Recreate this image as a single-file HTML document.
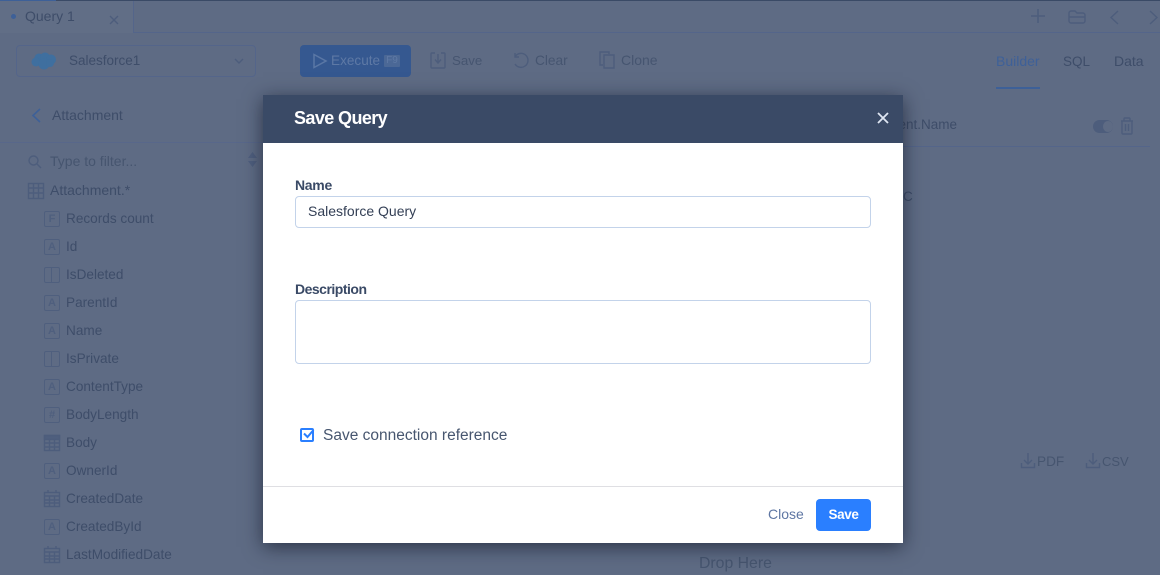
<!DOCTYPE html>
<html lang="en"><head><meta charset="utf-8"><title>Save Query</title>
<style>
*{box-sizing:border-box}
html,body{margin:0;padding:0}
body{width:1160px;height:575px;position:relative;overflow:hidden;background:#5e6b84;font-family:"Liberation Sans",sans-serif;font-size:14px;color:#3e4d69}
.a{position:absolute}
.t{position:absolute;white-space:nowrap;line-height:18px}
svg{position:absolute;overflow:visible;fill:none;stroke:#4d5d7c;stroke-width:1.4}
.row{position:absolute;left:66px;white-space:nowrap;line-height:18px;color:#3e4d69;font-size:13.6px}
.ic{position:absolute;left:44px;width:16px;height:16px;border:1px solid #4f5f7e;border-radius:2px;color:#4f5f7e;font-size:11px;line-height:14px;text-align:center;font-weight:bold}
.ic.b:after{content:"";position:absolute;left:6px;top:0;bottom:0;width:1px;background:#4f5f7e}
#modal{position:absolute;left:263px;top:95px;width:640px;height:448px;background:#fff;box-shadow:0 4px 18px rgba(10,15,30,.6)}
</style></head><body>
<div class="a" style="left:0;top:0;width:1160px;height:1px;background:#3a4a66"></div>
<div class="a" style="left:0;top:1px;width:134px;height:32px;background:#616e86;border-right:1px solid #54658a"></div>
<div class="a" style="left:134px;top:32px;width:1026px;height:1px;background:#54658a"></div>
<div class="a" style="left:0;top:0;width:56px;height:1px;background:#3d6098"></div>
<div class="a" style="left:11px;top:14px;width:5px;height:5px;border-radius:50%;background:#3d6098"></div>
<div class="t" style="left:25px;top:7px;font-size:14px">Query 1</div>
<svg style="left:109px;top:15px" width="10" height="10"><path d="M1 1L9 9M9 1L1 9"/></svg>

<svg style="left:1031px;top:9px" width="14" height="14"><path d="M7 0V14M0 7H14" stroke-width="1.6"/></svg>
<svg style="left:1068px;top:10px" width="18" height="14"><path d="M1 3C1 2 2 1 3 1H7L9 3H15C16 3 17 4 17 5V11C17 12 16 13 15 13H3C2 13 1 12 1 11ZM1 7H17"/></svg>
<svg style="left:1110px;top:10px" width="9" height="15"><path d="M8 1L1 7.5L8 14"/></svg>
<svg style="left:1149px;top:10px" width="9" height="15"><path d="M1 1L8 7.5L1 14"/></svg>

<div class="a" style="left:16px;top:45px;width:240px;height:32px;border:1px solid #54658a;border-radius:4px"></div>
<svg style="left:31px;top:52px;stroke:none;fill:#3f6f9f" width="26" height="18"><circle cx="8" cy="6" r="4.500"/><circle cx="14" cy="5.500" r="5"/><circle cx="20" cy="7.500" r="5"/><circle cx="5" cy="10" r="4.500"/><circle cx="13" cy="12" r="5.500"/><circle cx="19" cy="11" r="4"/></svg>
<div class="t" style="left:69px;top:52px;font-size:13.500px">Salesforce1</div>
<svg style="left:234px;top:58px" width="10" height="6"><path d="M1 1L5 5L9 1"/></svg>

<div class="a" style="left:300px;top:45px;width:111px;height:32px;background:#355890;border-radius:4px"></div>
<svg style="left:313px;top:53px;stroke:#5a77a5;stroke-width:1.5" width="14" height="16"><path d="M1 1.500L13 8L1 14.500Z"/></svg>
<div class="t" style="left:331px;top:52px;font-size:13.600px;color:#5e79a5">Execute</div>
<div class="a" style="left:384px;top:55px;width:16px;height:12px;background:#4b6896;color:#5e79a5;font-size:10px;line-height:12px;text-align:center;border-radius:1px">F9</div>

<svg style="left:430px;top:52px" width="16" height="17"><path d="M5 1H2C1.400 1 1 1.400 1 2V15C1 15.600 1.400 16 2 16H14C14.600 16 15 15.600 15 15V2C15 1.400 14.600 1 14 1H11M8 2V10M5 7.500L8 11L11 7.500"/></svg>
<div class="t" style="left:452px;top:52px;font-size:13.300px;color:#465570">Save</div>
<svg style="left:513px;top:52px" width="16" height="17"><path d="M2.500 4A7 7 0 1 1 2 12M2 1V5H6"/></svg>
<div class="t" style="left:535px;top:52px;font-size:13.700px;color:#465570">Clear</div>
<svg style="left:599px;top:51px" width="16" height="18"><path d="M10 3V1H1V14H4M5 4H15V17H5Z"/></svg>
<div class="t" style="left:621px;top:51px;font-size:14px;color:#465570">Clone</div>

<div class="t" style="left:996px;top:52px;font-size:14px;color:#3e6098">Builder</div>
<div class="t" style="left:1063px;top:53px;font-size:13.500px">SQL</div>
<div class="t" style="left:1114px;top:52px;font-size:14px">Data</div>
<div class="a" style="left:996px;top:87px;width:44px;height:2px;background:#3d6098"></div>

<svg style="left:31px;top:108px;stroke:#3d6098;stroke-width:1.6" width="10" height="15"><path d="M9 1L2 7.500L9 14"/></svg>
<div class="t" style="left:52px;top:106px;font-size:14px">Attachment</div>
<div class="a" style="left:0;top:142px;width:263px;height:1px;background:#58678a"></div>
<svg style="left:28px;top:155px" width="13" height="13"><circle cx="5.500" cy="5.500" r="4.500"/><path d="M9 9L13 13"/></svg>
<div class="t" style="left:50px;top:152px;font-size:14px;color:#46556f">Type to filter...</div>
<svg style="left:248px;top:152px;stroke:none;fill:#4f5f7e" width="9" height="15"><path d="M4.500 0L9 6H0ZM0 9H9L4.500 15Z"/></svg>

<svg style="left:28px;top:183px" width="16" height="16"><rect x=".5" y=".5" width="15" height="15"/><path d="M.5 5H15.500M.5 10H15.500M5.500 .5V15.500M10.500 .5V15.500"/></svg>
<div class="t" style="left:50px;top:181px;font-size:14px">Attachment.*</div>

<div class="ic" style="top:211px">F</div><div class="row" style="top:210px">Records count</div>
<div class="ic" style="top:239px">A</div><div class="row" style="top:238px">Id</div>
<div class="ic b" style="top:267px"></div><div class="row" style="top:266px">IsDeleted</div>
<div class="ic" style="top:295px">A</div><div class="row" style="top:294px">ParentId</div>
<div class="ic" style="top:323px">A</div><div class="row" style="top:322px">Name</div>
<div class="ic b" style="top:351px"></div><div class="row" style="top:350px">IsPrivate</div>
<div class="ic" style="top:379px">A</div><div class="row" style="top:378px">ContentType</div>
<div class="ic" style="top:407px">#</div><div class="row" style="top:406px">BodyLength</div>
<svg style="left:44px;top:435px" width="16" height="16"><rect x=".5" y=".5" width="15" height="15"/><rect x=".5" y=".5" width="15" height="4" fill="#4f5f7e"/><path d="M.5 8H15.500M.5 12H15.500M5.500 4V15.500M10.500 4V15.500"/></svg><div class="row" style="top:434px">Body</div>
<div class="ic" style="top:463px">A</div><div class="row" style="top:462px">OwnerId</div>
<svg style="left:44px;top:490px" width="16" height="17"><rect x=".5" y="2.500" width="15" height="14"/><path d="M.5 6H15.500M.5 10H15.500M.5 13H15.500M5.500 6V16.500M10.500 6V16.500M4 0V3M12 0V3"/></svg><div class="row" style="top:490px">CreatedDate</div>
<div class="ic" style="top:519px">A</div><div class="row" style="top:518px">CreatedById</div>
<svg style="left:44px;top:546px" width="16" height="17"><rect x=".5" y="2.500" width="15" height="14"/><path d="M.5 6H15.500M.5 10H15.500M.5 13H15.500M5.500 6V16.500M10.500 6V16.500M4 0V3M12 0V3"/></svg><div class="row" style="top:546px">LastModifiedDate</div>

<div class="a" style="left:903px;top:146px;width:247px;height:1px;background:#54658a"></div>
<div class="t" style="left:849px;top:116px;font-size:13.500px">Attachment.Name</div>
<div class="a" style="left:1093px;top:120px;width:20px;height:13px;border-radius:7px;background:#4d5d7c"></div>
<div class="a" style="left:1103px;top:121px;width:10px;height:11px;border-radius:50%;background:#5e6b84"></div>
<svg style="left:1120px;top:117px" width="14" height="18"><path d="M1 4H13M4 4V2C4 1.400 4.500 1 5 1H9C9.500 1 10 1.400 10 2V4M2 4V16C2 16.600 2.500 17 3 17H11C11.500 17 12 16.600 12 16V4M5.500 7V14M8.500 7V14"/></svg>
<div class="t" style="left:903px;top:188px;font-size:13.500px">C</div>

<svg style="left:1021px;top:453px" width="14" height="15"><path d="M7 0V11M3 7L7 11L11 7M.5 10V14.500H13.500V10"/></svg>
<div class="t" style="left:1037px;top:453px;font-size:13.600px;color:#46556f">PDF</div>
<svg style="left:1086px;top:453px" width="14" height="15"><path d="M7 0V11M3 7L7 11L11 7M.5 10V14.500H13.500V10"/></svg>
<div class="t" style="left:1102px;top:453px;font-size:13px;color:#46556f">CSV</div>
<div class="t" style="left:699px;top:555px;font-size:15.800px;color:#46556f">Drop Here</div>

<div id="modal">
  <div class="a" style="left:0;top:0;width:640px;height:48px;background:#3a4a66"></div>
  <div class="t" style="left:31px;top:13px;font-size:18px;line-height:20px;font-weight:bold;color:#fff;letter-spacing:-.6px">Save Query</div>
  <svg style="left:615px;top:18px;stroke:#dfe6f2;stroke-width:1.800" width="10" height="10"><path d="M0 0L10 10M10 0L0 10"/></svg>
  <div class="t" style="left:32px;top:81px;font-size:14px;font-weight:bold;color:#3a4a66;letter-spacing:-.3px">Name</div>
  <div class="a" style="left:32px;top:101px;width:576px;height:32px;border:1px solid #c3d3ea;border-radius:4px"></div>
  <div class="t" style="left:45px;top:107px;font-size:14px;color:#333f55">Salesforce Query</div>
  <div class="t" style="left:32px;top:185px;font-size:14px;font-weight:bold;color:#3a4a66;letter-spacing:-.5px">Description</div>
  <div class="a" style="left:32px;top:205px;width:576px;height:64px;border:1px solid #c3d3ea;border-radius:4px"></div>
  <div class="a" style="left:37px;top:333px;width:14px;height:14px;border:2px solid #2a7fff;border-radius:2px"></div>
  <svg style="left:40px;top:334px;stroke:#2a7fff;stroke-width:2" width="11" height="10"><path d="M1 4.500L4.500 8L10.500 1"/></svg>
  <div class="t" style="left:60px;top:332px;font-size:15.500px;color:#47566f">Save connection reference</div>
  <div class="a" style="left:0;top:391px;width:640px;height:1px;background:#dfdfe3"></div>
  <div class="t" style="left:505px;top:410px;font-size:14px;color:#5e76a3">Close</div>
  <div class="a" style="left:553px;top:404px;width:55px;height:32px;background:#2a7fff;border-radius:4px;color:#fff;font-size:13.500px;font-weight:bold;line-height:31px;text-align:center;letter-spacing:-.4px">Save</div>
</div>
</body></html>
